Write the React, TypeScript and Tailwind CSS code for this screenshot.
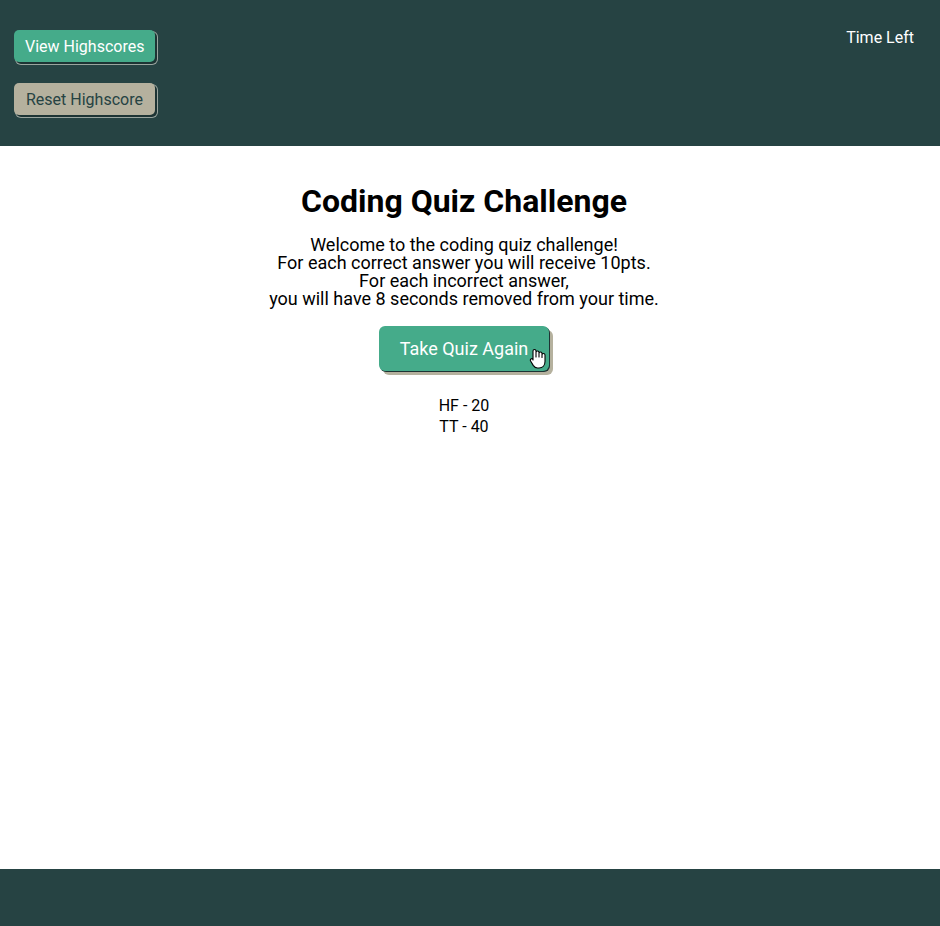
import React from "react"

const scores = [
  { initials: "HF", score: 20 },
  { initials: "TT", score: 40 },
]

function HandCursor() {
  return (
    <svg width="18" height="22" viewBox="0 0 18 22" className="absolute right-[2px] top-[22px]">
      <path
        d="M5.5 1.5c.9 0 1.5.6 1.5 1.5v6V4.5c0-.9.6-1.5 1.5-1.5S10 3.6 10 4.5v4.5V5.5c0-.9.6-1.5 1.5-1.5S13 4.6 13 5.5v4V7c0-.9.6-1.5 1.5-1.5S16 6.1 16 7v6.5c0 3.9-2.4 6.5-6 6.5H8.5c-2 0-3.3-1-4.3-2.6L1.6 13c-.5-.8-.3-1.7.4-2.1.7-.4 1.5-.2 2 .5L4 12V3c0-.9.6-1.5 1.5-1.5z"
        fill="#fff"
        stroke="#000"
        strokeWidth="1.1"
        strokeLinejoin="round"
      />
    </svg>
  )
}

export default function App() {
  return (
    <div className="flex min-h-[926px] flex-col bg-white font-['Roboto',sans-serif]">
      <header className="flex h-[146px] justify-between bg-[#264343] pl-[14px] pr-[26px] pt-[30px]">
        <div className="flex flex-col items-start gap-[21px]">
          <button className="h-[32px] rounded-[5px] bg-[#45ab8a] px-[11px] pt-[1px] text-[16px] text-white shadow-[2px_2px_0_#1d3434,2px_2px_0_1px_#9aa59f]">
            View Highscores
          </button>
          <button className="h-[32px] rounded-[5px] bg-[#b5b19e] px-[12px] pt-[1px] text-[16px] text-[#264343] shadow-[2px_2px_0_#1d3434,2px_2px_0_1px_#9aa59f]">
            Reset Highscore
          </button>
        </div>
        <div className="text-[16px] leading-[16px] text-white">Time Left</div>
      </header>

      <main className="flex flex-1 flex-col items-center pr-[12px] pt-[36px] text-center text-black">
        <h1 className="text-[32px] font-bold leading-[38px]">Coding Quiz Challenge</h1>
        <p className="mt-[16px] text-[18px] leading-[18px]">
          Welcome to the coding quiz challenge!
          <br />
          For each correct answer you will receive 10pts.
          <br />
          For each incorrect answer,
          <br />
          you will have 8 seconds removed from your time.
        </p>
        <button className="relative mt-[18px] h-[45px] rounded-[6px] bg-[#45ab8a] px-[21px] text-[18px] text-white shadow-[1px_1px_0_#1d3434,4px_4px_0_#b5b19e]">
          Take Quiz Again
          <HandCursor />
        </button>
        <ul className="mt-[24px] text-[16px] leading-[21px]">
          {scores.map((s) => (
            <li key={s.initials}>
              {s.initials} - {s.score}
            </li>
          ))}
        </ul>
      </main>

      <footer className="h-[57px] bg-[#264343]" />
    </div>
  )
}
